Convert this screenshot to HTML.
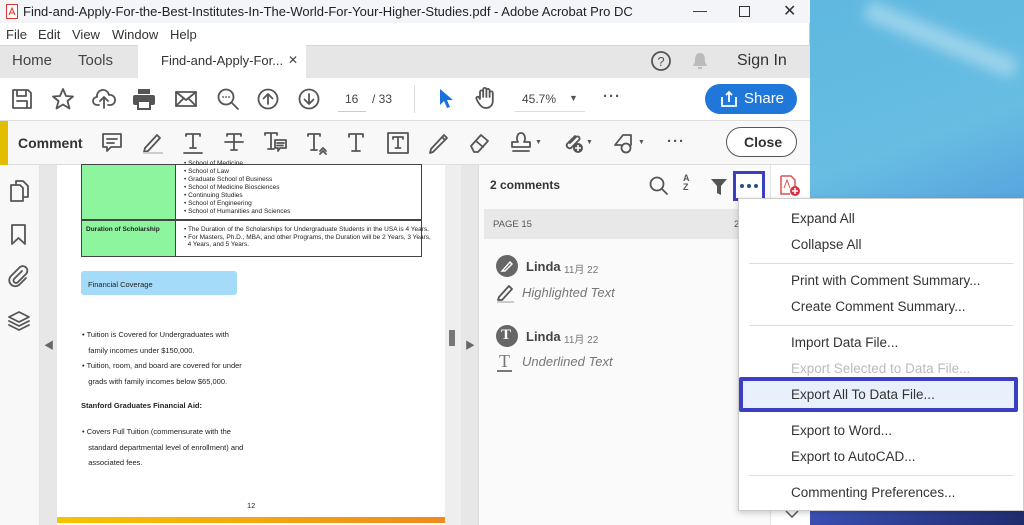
<!DOCTYPE html>
<html><head><meta charset="utf-8"><style>
*{margin:0;padding:0;box-sizing:border-box}
body{width:1024px;height:525px;overflow:hidden;position:relative;font-family:"Liberation Sans","Noto Sans CJK SC",sans-serif;background:#fff}
.a{position:absolute}
.desk{left:810px;top:0;width:214px;height:525px;background:linear-gradient(160deg,#5fb8e0 0%,#67bde2 30%,#4a8fdc 60%,#3d52b8 85%,#1d2a6a 100%)}
.t{white-space:nowrap;color:#333}
svg{position:absolute;overflow:visible}
.ic{stroke:#555;stroke-width:1.8;fill:none;stroke-linecap:round;stroke-linejoin:round}
.mi{position:absolute;left:52px;font-size:13.5px;color:#333;white-space:nowrap}
.sep{position:absolute;left:10px;right:10px;height:1px;background:#ddd}
.pt{font-size:6.5px;color:#222;position:absolute;white-space:nowrap}
.pl{font-size:7.5px;color:#222;position:absolute;white-space:nowrap}
</style></head><body>
<div class="a desk"></div>
<div class="a" style="left:870px;top:0;width:160px;height:20px;background:rgba(255,255,255,.35);transform:rotate(22deg);transform-origin:0 0;filter:blur(6px)"></div>
<!-- window -->
<div class="a" style="left:0;top:0;width:810px;height:525px;background:#fff;border-right:1px solid #ccc"></div>
<!-- title -->
<div class="a" style="left:0;top:0;width:810px;height:23px;background:#f3f5f8"></div>
<svg style="left:6px;top:4px" width="12" height="15"><rect x="0.5" y="0.5" width="11" height="14" fill="#fff" stroke="#d33"/><path d="M3 11 L6 4 L9 11 M4 9 h4" stroke="#d33" fill="none"/></svg>
<div class="a t" style="left:23px;top:4px;font-size:13px;color:#222">Find-and-Apply-For-the-Best-Institutes-In-The-World-For-Your-Higher-Studies.pdf - Adobe Acrobat Pro DC</div>
<div class="a t" style="left:693px;top:2px;font-size:14px">—</div>
<div class="a" style="left:739px;top:6px;width:11px;height:11px;border:1.3px solid #333"></div>
<div class="a t" style="left:783px;top:1px;font-size:16px">✕</div>
<!-- menubar -->
<div class="a t" style="left:6px;top:27px;font-size:13px;word-spacing:0">File</div>
<div class="a t" style="left:38px;top:27px;font-size:13px">Edit</div>
<div class="a t" style="left:72px;top:27px;font-size:13px">View</div>
<div class="a t" style="left:112px;top:27px;font-size:13px">Window</div>
<div class="a t" style="left:170px;top:27px;font-size:13px">Help</div>
<!-- tabs -->
<div class="a" style="left:0;top:45px;width:810px;height:33px;background:#e6e6e6;border-top:1px solid #d6d6d6"></div>
<div class="a" style="left:138px;top:45px;width:168px;height:33px;background:#fff"></div>
<div class="a t" style="left:12px;top:52px;font-size:15px;color:#444">Home</div>
<div class="a t" style="left:78px;top:52px;font-size:15px;color:#444">Tools</div>
<div class="a t" style="left:161px;top:53px;font-size:13px;color:#333">Find-and-Apply-For...</div>
<div class="a t" style="left:288px;top:53px;font-size:12px;color:#444">✕</div>
<svg style="left:651px;top:51px" width="20" height="20"><circle cx="10" cy="10" r="9" class="ic" stroke-width="1.5"/><text x="10" y="15" font-size="13" text-anchor="middle" fill="#555" font-family="Liberation Sans">?</text></svg>
<svg style="left:692px;top:51px" width="16" height="20"><path d="M8 2 C3 2 3 7 3 11 L1 15 H15 L13 11 C13 7 13 2 8 2Z M6 16 h4 v2 h-4z" fill="#bbb"/></svg>
<div class="a t" style="left:737px;top:52px;font-size:16px;color:#333">Sign In</div>
<!-- toolbar -->
<div class="a" style="left:0;top:78px;width:810px;height:43px;background:#fff;border-bottom:1px solid #ddd"></div>
<svg style="left:12px;top:89px" width="20" height="20"><path d="M1 1 H16 L19 4 V19 H1Z M5 1 V7 H14 V1 M5 12 H15 V19" class="ic" stroke="#aaa" stroke-width="1.5"/></svg>
<svg style="left:52px;top:88px" width="22" height="22"><path d="M11 1 L14 8 L21 8.5 L15.5 13 L17.5 20.5 L11 16.5 L4.5 20.5 L6.5 13 L1 8.5 L8 8 Z" class="ic" stroke-width="1.6"/></svg>
<svg style="left:92px;top:88px" width="24" height="22"><path d="M7 17 H5 A4 4 0 0 1 5 9 A6 6 0 0 1 17 7 A5 5 0 0 1 19 17 H16 M12 20 V10 M8 13 L12 9 L16 13" class="ic"/></svg>
<svg style="left:133px;top:88px" width="22" height="22"><path d="M5 1 H17 V6 H5Z" fill="#555"/><rect x="0" y="7" width="22" height="10" rx="2" fill="#555"/><rect x="5" y="13" width="12" height="8" fill="#fff" stroke="#555" stroke-width="2"/></svg>
<svg style="left:175px;top:91px" width="22" height="16"><rect x="1" y="1" width="20" height="14" class="ic" stroke-width="1.5"/><path d="M1 1 L11 9 L21 1 M1 15 L8 8 M21 15 L14 8" class="ic" stroke-width="1.5"/></svg>
<svg style="left:217px;top:88px" width="22" height="22"><circle cx="9" cy="9" r="7.5" class="ic" stroke-width="1.8"/><path d="M14.5 14.5 L21 21" class="ic" stroke-width="2.4"/><path d="M6 9h.1M9 9h.1M12 9h.1" class="ic" stroke-width="2"/></svg>
<svg style="left:257px;top:88px" width="22" height="22"><circle cx="11" cy="11" r="9.5" class="ic"/><path d="M11 16 V6 M6.5 10.5 L11 6 L15.5 10.5" class="ic"/></svg>
<svg style="left:298px;top:88px" width="22" height="22"><circle cx="11" cy="11" r="9.5" class="ic"/><path d="M11 6 V16 M6.5 11.5 L11 16 L15.5 11.5" class="ic"/></svg>
<div class="a t" style="left:345px;top:92px;font-size:12px;color:#444">16</div>
<div class="a" style="left:338px;top:111px;width:28px;height:1px;background:#ccc"></div>
<div class="a t" style="left:372px;top:92px;font-size:12px;color:#444">/ 33</div>
<div class="a" style="left:414px;top:85px;width:1px;height:28px;background:#ddd"></div>
<svg style="left:438px;top:88px" width="16" height="22"><path d="M2 1 L2 17 L6 13 L9 20 L12 19 L9 12 L15 12 Z" fill="#1a73d9"/></svg>
<svg style="left:475px;top:86px" width="22" height="24"><path d="M5 13 V6 a1.6 1.6 0 0 1 3.2 0 V11 V3.5 a1.6 1.6 0 0 1 3.2 0 V11 V4.5 a1.6 1.6 0 0 1 3.2 0 V11 V7 a1.6 1.6 0 0 1 3.2 0 V15 C17.8 19 15 22 11 22 C7 22 5 19 3 16 L1.5 13 a1.5 1.5 0 0 1 2.6-1.5 L5 13" class="ic" stroke-width="1.5"/></svg>
<div class="a t" style="left:522px;top:92px;font-size:12px;color:#444">45.7%</div>
<div class="a t" style="left:569px;top:93px;font-size:9px;color:#555">▼</div>
<div class="a" style="left:515px;top:111px;width:70px;height:1px;background:#ddd"></div>
<div class="a t" style="left:603px;top:88px;font-size:15px;color:#555;letter-spacing:1px;font-weight:bold">···</div>
<div class="a" style="left:705px;top:84px;width:92px;height:30px;background:#1f78d9;border-radius:15px"></div>
<svg style="left:721px;top:91px" width="16" height="16"><path d="M1 6 V15 H15 V6 M8 11 V1 M5 4 L8 1 L11 4" stroke="#fff" stroke-width="1.8" fill="none"/></svg>
<div class="a t" style="left:744px;top:90px;font-size:15px;color:#fff">Share</div>
<!-- comment bar -->
<div class="a" style="left:0;top:121px;width:810px;height:44px;background:#f8f8f8;border-bottom:1px solid #ddd"></div>
<div class="a" style="left:0;top:121px;width:8px;height:44px;background:#e3bd00"></div>
<div class="a t" style="left:18px;top:135px;font-size:14px;color:#333;font-weight:bold">Comment</div>
<svg style="left:102px;top:133px" width="20" height="20"><path d="M1 1 H19 V14 H9 L5 18 V14 H1Z M5 6H15 M5 10H12" class="ic" stroke-width="1.6"/></svg>
<svg style="left:141px;top:132px" width="24" height="22"><path d="M4 16 L16 3 L19 6 L7 19 L3 20Z" class="ic" stroke-width="1.6"/><rect x="2" y="20" width="20" height="2" fill="#ccc"/></svg>
<svg style="left:183px;top:133px" width="20" height="22"><path d="M3 3 V1 H17 V3 M10 1 V15 M7 15 H13 M1 20 H19" class="ic" stroke-width="1.6"/></svg>
<svg style="left:224px;top:133px" width="20" height="22"><path d="M3 3 V1 H17 V3 M10 1 V17 M7 17 H13 M1 9 H19" class="ic" stroke-width="1.6"/></svg>
<svg style="left:264px;top:132px" width="24" height="22"><path d="M1 3 V1 H13 V3 M7 1 V17 M4 17 H10" class="ic" stroke-width="1.6"/><path d="M11 8 H22 V16 H16 L14 19 V16 H11Z M13 11H20 M13 13.5H19" class="ic" stroke-width="1.4"/></svg>
<svg style="left:305px;top:133px" width="24" height="22"><path d="M3 3 V1 H15 V3 M9 1 V17 M6 17 H12 M15 18 L18 15 L21 18 M15 21 L18 18 L21 21" class="ic" stroke-width="1.6"/></svg>
<svg style="left:347px;top:133px" width="18" height="20"><path d="M2 4 V1 H16 V4 M9 1 V18 M5 18 H13" class="ic" stroke-width="1.6"/></svg>
<svg style="left:387px;top:132px" width="22" height="22"><rect x="1" y="1" width="20" height="20" class="ic" stroke-width="1.6"/><path d="M6 7 V5 H16 V7 M11 5 V16 M8.5 16 H13.5" class="ic" stroke-width="1.4"/></svg>
<svg style="left:428px;top:132px" width="22" height="22"><path d="M3 17 L16 3 L19 6 L5 20 L2 21Z M14 5 L17 8" class="ic" stroke-width="1.6"/></svg>
<svg style="left:468px;top:132px" width="24" height="22"><path d="M3 14 L13 3 L20 9 L10 20 H6Z M8 9 L15 15" class="ic" stroke-width="1.6"/></svg>
<svg style="left:510px;top:131px" width="22" height="24"><path d="M8 11 C6 8 7 2 11 2 C15 2 16 8 14 11 H20 V16 H2 V11Z M3 20 H19" class="ic" stroke-width="1.6"/></svg>
<div class="a t" style="left:535px;top:139px;font-size:7px;color:#555">▼</div>
<svg style="left:562px;top:131px" width="22" height="24"><path d="M13 5 L5 13 a3 3 0 0 0 4 4 L17 9 a2 2 0 0 0 -3 -3 L8 12" class="ic" stroke-width="1.6"/><circle cx="16" cy="17" r="5" fill="#555"/><path d="M16 14 V20 M13 17 H19" stroke="#fff" stroke-width="1.6"/></svg>
<div class="a t" style="left:586px;top:139px;font-size:7px;color:#555">▼</div>
<svg style="left:613px;top:131px" width="24" height="24"><path d="M2 14 L10 4 H18 V14 M2 14 H8" class="ic" stroke-width="1.6"/><circle cx="13" cy="17" r="4.5" class="ic" stroke-width="1.6"/></svg>
<div class="a t" style="left:638px;top:139px;font-size:7px;color:#555">▼</div>
<div class="a t" style="left:667px;top:133px;font-size:15px;color:#555;font-weight:bold;letter-spacing:1px">···</div>
<div class="a" style="left:726px;top:127px;width:71px;height:30px;border:1.5px solid #555;border-radius:15px;background:#fff"></div>
<div class="a t" style="left:744px;top:134px;font-size:14px;color:#333;font-weight:bold">Close</div>
<!-- left sidebar -->
<div class="a" style="left:0;top:165px;width:40px;height:360px;background:#f8f8f8;border-right:1px solid #e4e4e4"></div>
<svg style="left:10px;top:180px" width="20" height="22"><path d="M6 5 V1 H13 L18 6 V17 H13 M1 5 H10 L13 8 V21 H1Z" class="ic" stroke-width="1.6"/></svg>
<svg style="left:11px;top:224px" width="16" height="22"><path d="M1 1 H14 V20 L7.5 14 L1 20Z" class="ic" stroke-width="1.7"/></svg>
<svg style="left:8px;top:265px" width="22" height="24"><path d="M14 6 L6 14 a2.5 2.5 0 0 0 3.5 3.5 L18 9 a4.5 4.5 0 0 0 -6.5 -6.5 L3 11 a6 6 0 0 0 8.5 8.5 L18 13" class="ic" stroke-width="1.7"/></svg>
<svg style="left:8px;top:311px" width="22" height="22"><path d="M11 1 L21 6 L11 11 L1 6Z M1 10 L11 15 L21 10 M1 14 L11 19 L21 14" class="ic" stroke-width="1.6"/></svg>
<!-- doc area -->
<div class="a" style="left:40px;top:165px;width:438px;height:360px;background:#e7e7e7"></div>
<div class="a t" style="left:44px;top:337px;font-size:10px;color:#666">◀</div>
<div class="a" style="left:57px;top:165px;width:388px;height:360px;background:#fff"></div>
<div class="a" style="left:445px;top:165px;width:16px;height:360px;background:#eee"></div>
<div class="a" style="left:449px;top:330px;width:6px;height:16px;background:#777"></div>
<div class="a t" style="left:465px;top:337px;font-size:10px;color:#666">▶</div>
<!-- table -->
<div class="a" style="left:81px;top:164px;width:95px;height:93px;background:#8df59d;border:1.2px solid #444"></div>
<div class="a" style="left:175px;top:164px;width:247px;height:93px;border:1.2px solid #444;border-left:none"></div>
<div class="a" style="left:81px;top:219px;width:341px;height:1.5px;background:#444"></div>
<div class="pt" style="left:184px;top:160px;line-height:8px">• School of Medicine<br>• School of Law<br>• Graduate School of Business<br>• School of Medicine Biosciences<br>• Continuing Studies<br>• School of Engineering<br>• School of Humanities and Sciences</div>
<div class="pt" style="left:86px;top:226px;font-weight:bold">Duration of Scholarship</div>
<div class="pt" style="left:184px;top:226px;line-height:7.5px">• The Duration of the Scholarships for Undergraduate Students in the USA is 4 Years.<br>• For Masters, Ph.D., MBA, and other Programs, the Duration will be 2 Years, 3 Years,<br>&nbsp;&nbsp;4 Years, and 5 Years.</div>
<div class="a" style="left:81px;top:271px;width:156px;height:24px;background:#a3dbf8;border-radius:3px"></div>
<div class="pl" style="left:88px;top:280px">Financial Coverage</div>
<div class="pl" style="left:82px;top:327px;line-height:15.5px">• Tuition is Covered for Undergraduates with<br>&nbsp;&nbsp;&nbsp;family incomes under $150,000.<br>• Tuition, room, and board are covered for under<br>&nbsp;&nbsp;&nbsp;grads with family incomes below $65,000.</div>
<div class="pl" style="left:81px;top:401px;font-weight:bold">Stanford Graduates Financial Aid:</div>
<div class="pl" style="left:82px;top:424px;line-height:15.5px">• Covers Full Tuition (commensurate with the<br>&nbsp;&nbsp;&nbsp;standard departmental level of enrollment) and<br>&nbsp;&nbsp;&nbsp;associated fees.</div>
<div class="pl" style="left:247px;top:501px">12</div>
<div class="a" style="left:57px;top:517px;width:388px;height:6px;background:linear-gradient(90deg,#f5c500,#f08a20)"></div>
<!-- comments panel -->
<div class="a" style="left:478px;top:165px;width:292px;height:360px;background:#fafafa;border-left:1px solid #ddd"></div>
<div class="a" style="left:770px;top:165px;width:40px;height:360px;background:#fff;border-left:1px solid #e4e4e4"></div>
<div class="a t" style="left:490px;top:178px;font-size:12px;font-weight:bold;color:#333">2 comments</div>
<svg style="left:649px;top:176px" width="20" height="20"><circle cx="8" cy="8" r="6.5" class="ic" stroke-width="1.7"/><path d="M13 13 L18 18" class="ic" stroke-width="2"/></svg>
<div class="a t" style="left:683px;top:174px;font-size:9px;color:#555;line-height:9px;font-weight:bold">A<br>Z</div>
<svg style="left:710px;top:178px" width="18" height="18"><path d="M1 1 H17 L11 8 V17 L7 15 V8Z" fill="#555"/></svg>
<div class="a" style="left:733px;top:171px;width:32px;height:30px;border:3.5px solid #3b3fc4;background:#fff"></div>
<div class="a" style="left:740px;top:184px;width:4px;height:4px;border-radius:2px;background:#24508a;box-shadow:7px 0 #24508a,14px 0 #24508a"></div>
<svg style="left:780px;top:175px" width="22" height="22"><path d="M1 1 H11 L15 5 V12 M10 19 H1 V1" stroke="#e05050" stroke-width="1.5" fill="none"/><path d="M4 13 L7 5 L10 13" stroke="#e05050" stroke-width="1" fill="none"/><circle cx="15" cy="16" r="5" fill="#e03040"/><path d="M15 13 V19 M12 16 H18" stroke="#fff" stroke-width="1.6"/></svg>
<div class="a" style="left:484px;top:209px;width:260px;height:30px;background:#e8e8e8"></div>
<div class="a t" style="left:493px;top:219px;font-size:9.5px;color:#555">PAGE 15</div>
<div class="a t" style="left:734px;top:219px;font-size:9.5px;color:#555">2</div>
<div class="a" style="left:496px;top:255px;width:22px;height:22px;border-radius:11px;background:#666"></div>
<svg style="left:500px;top:259px" width="14" height="14"><path d="M3 11 L10 3 L12 5 L5 12 L2 12Z" stroke="#fff" stroke-width="1.4" fill="none"/></svg>
<div class="a t" style="left:526px;top:259px;font-size:13px;font-weight:bold;color:#444">Linda</div>
<div class="a t" style="left:564px;top:261px;font-size:10px;color:#777">11月 22</div>
<svg style="left:496px;top:283px" width="20" height="20"><path d="M3 14 L13 3 L16 6 L6 17 L2 17Z" class="ic" stroke="#888" stroke-width="1.4"/><rect x="1" y="18" width="17" height="2" fill="#ccc"/></svg>
<div class="a t" style="left:522px;top:285px;font-size:13px;font-style:italic;color:#777">Highlighted Text</div>
<div class="a" style="left:496px;top:325px;width:22px;height:22px;border-radius:11px;background:#666"></div>
<div class="a t" style="left:501px;top:327px;font-size:15px;font-family:'Liberation Serif',serif;color:#fff;font-weight:bold">T</div>
<div class="a t" style="left:526px;top:329px;font-size:13px;font-weight:bold;color:#444">Linda</div>
<div class="a t" style="left:564px;top:331px;font-size:10px;color:#777">11月 22</div>
<div class="a t" style="left:499px;top:351px;font-size:18px;font-family:'Liberation Serif',serif;color:#777">T</div>
<div class="a" style="left:497px;top:370px;width:15px;height:1.5px;background:#777"></div>
<div class="a t" style="left:522px;top:354px;font-size:13px;font-style:italic;color:#777">Underlined Text</div>
<svg style="left:785px;top:510px" width="14" height="8"><path d="M1 1 L7 7 L13 1" stroke="#555" stroke-width="1.5" fill="none"/></svg>
<!-- dropdown menu -->
<div class="a" style="left:738px;top:198px;width:286px;height:313px;background:#fff;border:1px solid #ccc;box-shadow:0 2px 6px rgba(0,0,0,.2)">
<div class="mi" style="top:12px">Expand All</div>
<div class="mi" style="top:38px">Collapse All</div>
<div class="sep" style="top:64px"></div>
<div class="mi" style="top:74px">Print with Comment Summary...</div>
<div class="mi" style="top:100px">Create Comment Summary...</div>
<div class="sep" style="top:126px"></div>
<div class="mi" style="top:136px">Import Data File...</div>
<div class="mi" style="top:162px;color:#bbb">Export Selected to Data File...</div>
<div class="a" style="left:0;top:178px;width:279px;height:35px;background:#e8f1fb;border:4px solid #3b3fc4;border-radius:2px"></div>
<div class="mi" style="top:188px">Export All To Data File...</div>
<div class="mi" style="top:224px">Export to Word...</div>
<div class="mi" style="top:250px">Export to AutoCAD...</div>
<div class="sep" style="top:276px"></div>
<div class="mi" style="top:286px">Commenting Preferences...</div>
</div>
</body></html>
